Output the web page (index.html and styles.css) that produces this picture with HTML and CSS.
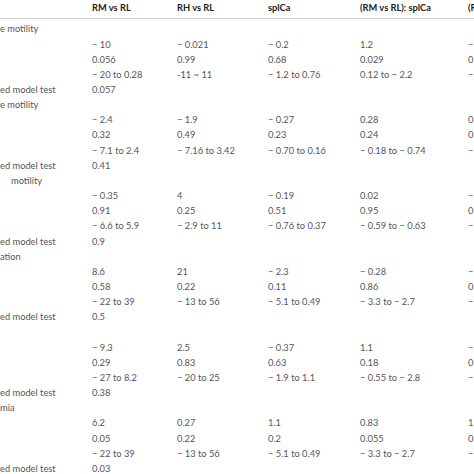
FILE: index.html
```html
<!DOCTYPE html>
<html>
<head>
<meta charset="utf-8">
<link rel="stylesheet" href="styles.css">
</head>
<body>
<div class="page">
  <div class="row head">
    <div class="c"></div><div class="c">RM vs RL</div><div class="c">RH vs RL</div><div class="c">splCa</div><div class="c">(RM vs RL): splCa</div><div class="c">(RH vs RL): splCa</div>
  </div>
  <div class="body">
    <div class="row"><div class="c">e motility</div></div>
    <div class="row"><div class="c"></div><div class="c">&minus; 10</div><div class="c">&minus; 0.021</div><div class="c">&minus; 0.2</div><div class="c">1.2</div><div class="c">&minus; 0.47</div></div>
    <div class="row"><div class="c"></div><div class="c">0.056</div><div class="c">0.99</div><div class="c">0.68</div><div class="c">0.029</div><div class="c">0.41</div></div>
    <div class="row"><div class="c"></div><div class="c">&minus; 20 to 0.28</div><div class="c">-11 ~ 11</div><div class="c">&minus; 1.2 to 0.76</div><div class="c">0.12 to &minus; 2.2</div><div class="c">&minus; 1.6 to 0.66</div></div>
    <div class="row"><div class="c">ed model test</div><div class="c">0.057</div></div>
    <div class="row"><div class="c">e motility</div></div>
    <div class="row"><div class="c"></div><div class="c">&minus; 2.4</div><div class="c">&minus; 1.9</div><div class="c">&minus; 0.27</div><div class="c">0.28</div><div class="c">0.16</div></div>
    <div class="row"><div class="c"></div><div class="c">0.32</div><div class="c">0.49</div><div class="c">0.23</div><div class="c">0.24</div><div class="c">0.52</div></div>
    <div class="row"><div class="c"></div><div class="c">&minus; 7.1 to 2.4</div><div class="c">&minus; 7.16 to 3.42</div><div class="c">&minus; 0.70 to 0.16</div><div class="c">&minus; 0.18 to &minus; 0.74</div><div class="c">&minus; 0.33 to 0.65</div></div>
    <div class="row"><div class="c">ed model test</div><div class="c">0.41</div></div>
    <div class="row"><div class="c ind">motility</div></div>
    <div class="row"><div class="c"></div><div class="c">&minus; 0.35</div><div class="c">4</div><div class="c">&minus; 0.19</div><div class="c">0.02</div><div class="c">&minus; 0.41</div></div>
    <div class="row"><div class="c"></div><div class="c">0.91</div><div class="c">0.25</div><div class="c">0.51</div><div class="c">0.95</div><div class="c">0.27</div></div>
    <div class="row"><div class="c"></div><div class="c">&minus; 6.6 to 5.9</div><div class="c">&minus; 2.9 to 11</div><div class="c">&minus; 0.76 to 0.37</div><div class="c">&minus; 0.59 to &minus; 0.63</div><div class="c">&minus; 1.1 to 0.32</div></div>
    <div class="row"><div class="c">ed model test</div><div class="c">0.9</div></div>
    <div class="row"><div class="c">ation</div></div>
    <div class="row"><div class="c"></div><div class="c">8.6</div><div class="c">21</div><div class="c">&minus; 2.3</div><div class="c">&minus; 0.28</div><div class="c">&minus; 1.9</div></div>
    <div class="row"><div class="c"></div><div class="c">0.58</div><div class="c">0.22</div><div class="c">0.11</div><div class="c">0.86</div><div class="c">0.43</div></div>
    <div class="row"><div class="c"></div><div class="c">&minus; 22 to 39</div><div class="c">&minus; 13 to 56</div><div class="c">&minus; 5.1 to 0.49</div><div class="c">&minus; 3.3 to &minus; 2.7</div><div class="c">&minus; 6.6 to 2.8</div></div>
    <div class="row"><div class="c">ed model test</div><div class="c">0.5</div></div>
    <div class="row"><div class="c"></div></div>
    <div class="row"><div class="c"></div><div class="c">&minus; 9.3</div><div class="c">2.5</div><div class="c">&minus; 0.37</div><div class="c">1.1</div><div class="c">&minus; 0.12</div></div>
    <div class="row"><div class="c"></div><div class="c">0.29</div><div class="c">0.83</div><div class="c">0.63</div><div class="c">0.18</div><div class="c">0.91</div></div>
    <div class="row"><div class="c"></div><div class="c">&minus; 27 to 8.2</div><div class="c">&minus; 20 to 25</div><div class="c">&minus; 1.9 to 1.1</div><div class="c">&minus; 0.55 to &minus; 2.8</div><div class="c">&minus; 2.2 to 1.9</div></div>
    <div class="row"><div class="c">ed model test</div><div class="c">0.38</div></div>
    <div class="row"><div class="c">mia</div></div>
    <div class="row"><div class="c"></div><div class="c">6.2</div><div class="c">0.27</div><div class="c">1.1</div><div class="c">0.83</div><div class="c">1.4</div></div>
    <div class="row"><div class="c"></div><div class="c">0.05</div><div class="c">0.22</div><div class="c">0.2</div><div class="c">0.055</div><div class="c">0.31</div></div>
    <div class="row"><div class="c"></div><div class="c">&minus; 22 to 39</div><div class="c">&minus; 13 to 56</div><div class="c">&minus; 5.1 to 0.49</div><div class="c">&minus; 3.3 to &minus; 2.7</div><div class="c">&minus; 1.4 to 4.2</div></div>
    <div class="row"><div class="c">ed model test</div><div class="c">0.03</div></div>
  </div>
</div>
</body>
</html>
```

FILE: styles.css
```css
html, body {
  margin: 0;
  padding: 0;
  background: #ffffff;
}

.page {
  width: 474px;
  height: 474px;
  overflow: hidden;
  font-family: "Lato", "Liberation Sans", sans-serif;
  font-size: 9.3px;
  color: #555555;
}

.row {
  display: grid;
  grid-template-columns: 92px 85px 91px 92px 108px 120px;
  height: 15.17px;
  align-items: center;
  white-space: nowrap;
}

.c {
  line-height: 15.17px;
}

.ind {
  padding-left: 11px;
}

.head {
  box-sizing: border-box;
  height: 19px;
  padding-top: 1px;
  border-bottom: 1px solid #cfcfcf;
  font-weight: 700;
  color: #222222;
  align-items: start;
}

.head .c {
  line-height: 14px;
}

.body {
  padding-top: 2.4px;
}
```
